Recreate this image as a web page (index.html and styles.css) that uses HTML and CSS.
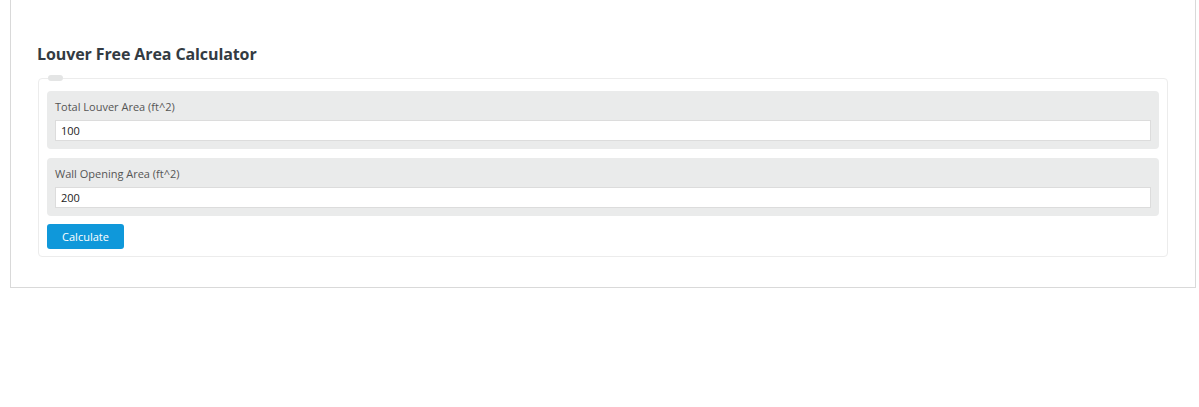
FILE: index.html
```html
<!DOCTYPE html>
<html lang="en">
<head>
  <meta charset="UTF-8" />
  <title>Louver Free Area Calculator</title>
  <link rel="stylesheet" href="styles.css">
</head>
<body>

  <div class="panel">
    <h2 class="title">Louver Free Area Calculator</h2>
    <form class="calc" onsubmit="event.preventDefault(); calculate();">
      <fieldset>
        <legend></legend>
        <div class="field">
          <label for="louver">Total Louver Area (ft^2)</label>
          <input type="text" id="louver" value="100" />
        </div>
        <div class="field">
          <label for="wall">Wall Opening Area (ft^2)</label>
          <input type="text" id="wall" value="200" />
        </div>
        <button class="button" type="submit">Calculate</button>
      </fieldset>
    </form>
  </div>

  <script>
    function calculate() {
      const louver = parseFloat(document.getElementById("louver").value);
      const wall = parseFloat(document.getElementById("wall").value);
      if (!louver || !wall) return;
      console.log("Free area ratio:", (louver / wall * 100).toFixed(2) + "%");
    }
  </script>

</body>
</html>
```

FILE: styles.css
```css
body {
  margin: 0;
  background: #fff;
  font-family: "Open Sans", Arial, sans-serif;
  color: #333;
}
.panel {
  margin-left: 10px;
  width: 1186px;
  height: 288px;
  box-sizing: border-box;
  border: 1px solid #d9d9d9;
  border-top: none;
  padding: 43px 27px 0 26px;
}
.title {
  margin: 0 0 10px;
  font-size: 16px;
  line-height: 22px;
  font-weight: 700;
  color: #333b42;
  letter-spacing: -0.1px;
}
fieldset {
  margin: 0 0 0 1px;
  padding: 10px 8px 7px;
  border: 1px solid #ececec;
  border-radius: 4px;
  min-width: 0;
}
legend {
  width: 15px;
  height: 6px;
  padding: 0;
  margin-left: 1px;
  background: #e4e5e5;
  border-radius: 3px;
}
.field {
  background: #eaebeb;
  border-radius: 4px;
  padding: 8px;
  margin-bottom: 9px;
}
.field label {
  display: block;
  font-size: 11px;
  line-height: 16px;
  margin-bottom: 5px;
  color: #555;
}
.field input {
  display: block;
  width: 100%;
  height: 21px;
  box-sizing: border-box;
  padding: 0 5px;
  font-family: "Open Sans", Arial, sans-serif;
  font-size: 11px;
  color: #222;
  background: #fff;
  border: 1px solid #dcdcdc;
  border-radius: 0;
  outline: none;
}
.button {
  display: block;
  width: 77px;
  height: 25px;
  margin-top: -1px;
  padding: 0;
  background-color: #0f98da;
  color: #fff;
  border: none;
  border-radius: 3px;
  font-family: "Open Sans", Arial, sans-serif;
  font-size: 11px;
  cursor: pointer;
}
```
